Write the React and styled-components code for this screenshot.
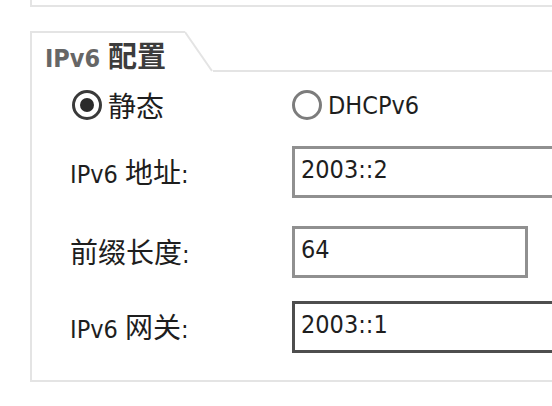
import styled, { createGlobalStyle } from 'styled-components';

const GlobalStyle = createGlobalStyle`
  html, body {
    margin: 0;
    padding: 0;
    background: #fff;
    overflow: hidden;
  }
  body {
    font-family: "DejaVu Sans Condensed", "DejaVu Sans", "Noto Sans CJK SC", sans-serif;
    font-size: 25px;
    color: #1e1e1e;
  }
`;

const Page = styled.div`
  width: 552px;
  height: 406px;
  padding-left: 30px;
  box-sizing: border-box;
  overflow: hidden;
`;

const TopPanel = styled.div`
  width: 600px;
  height: 5px;
  border-left: 2px solid #e4e4e4;
  border-bottom: 2px solid #e4e4e4;
`;

const GroupBox = styled.section`
  width: 600px;
  margin-top: 24px;
  border-left: 2px solid #e4e4e4;
  border-bottom: 2px solid #e4e4e4;
`;

const Header = styled.div`
  display: flex;
  height: 41px;
`;

const Tab = styled.div`
  width: 153px;
  padding: 5px 0 0 13px;
  box-sizing: border-box;
  border-top: 2px solid #e4e4e4;
  display: flex;
  align-items: center;
`;

const Title = styled.h3`
  margin: 0;
  font-size: 25px;
  font-weight: bold;
  line-height: 1;
  color: #666;
  white-space: nowrap;
`;

const Cjk = styled.span`
  font-family: "Noto Sans CJK SC", sans-serif;
  font-size: ${p => p.$size || 28}px;
  color: ${p => (p.$dark ? '#3c3c3c' : 'inherit')};
`;

const HeaderRest = styled.div`
  flex: 1;
  border-bottom: 2px solid #e4e4e4;
`;

const Body = styled.div`
  padding: 15px 0 27px 38px;
`;

const Row = styled.div`
  display: grid;
  grid-template-columns: 222px auto;
  align-items: center;
  height: ${p => p.$height}px;
  margin-top: ${p => p.$top}px;
`;

const Label = styled.label`
  line-height: 1;
  white-space: nowrap;
`;

const Radio = styled.div`
  display: inline-flex;
  align-items: center;
  gap: 6px;
  margin-left: ${p => p.$indent || 0}px;
  line-height: 1;
`;

const RadioCircle = styled.span`
  width: 30px;
  height: 30px;
  box-sizing: border-box;
  border-radius: 50%;
  border: 3px solid ${p => (p.$checked ? '#3a3a3a' : '#7c7c7c')};
  background: #fff;
  display: flex;
  align-items: center;
  justify-content: center;

  &::after {
    content: '';
    display: ${p => (p.$checked ? 'block' : 'none')};
    width: 14px;
    height: 14px;
    border-radius: 50%;
    background: #2a2a2a;
  }
`;

const Field = styled.input`
  width: ${p => p.$width}px;
  height: 52px;
  box-sizing: border-box;
  padding: 0 6px 6px 6px;
  border: 3px solid ${p => (p.$focused ? '#4e4e4e' : '#909090')};
  border-radius: 0;
  background: #fff;
  font: inherit;
  color: #1e1e1e;
  outline: none;
`;

export default function App() {
  return (
    <Page>
      <GlobalStyle />
      <TopPanel />
      <GroupBox>
        <Header>
          <Tab>
            <Title>
              IPv6 <Cjk $dark $size={29}>配置</Cjk>
            </Title>
          </Tab>
          <svg width="28" height="41" viewBox="0 0 28 41">
            <line x1="0" y1="1" x2="27" y2="40" stroke="#e4e4e4" strokeWidth="2" />
          </svg>
          <HeaderRest />
        </Header>
        <Body>
          <Row $height={36} $top={0}>
            <Radio $indent={2}>
              <RadioCircle $checked />
              <Cjk>静态</Cjk>
            </Radio>
            <Radio>
              <RadioCircle />
              <span>DHCPv6</span>
            </Radio>
          </Row>
          <Row $height={52} $top={23}>
            <Label>
              IPv6 <Cjk>地址</Cjk>:
            </Label>
            <Field $width={300} defaultValue="2003::2" readOnly />
          </Row>
          <Row $height={52} $top={28}>
            <Label>
              <Cjk>前缀长度</Cjk>:
            </Label>
            <Field $width={236} defaultValue="64" readOnly />
          </Row>
          <Row $height={52} $top={23}>
            <Label>
              IPv6 <Cjk>网关</Cjk>:
            </Label>
            <Field $width={300} $focused defaultValue="2003::1" readOnly />
          </Row>
        </Body>
      </GroupBox>
    </Page>
  );
}
